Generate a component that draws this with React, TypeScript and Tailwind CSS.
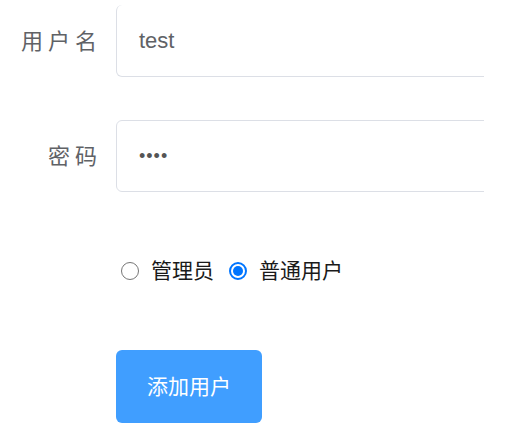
import React from 'react'

const font = { fontFamily: '"Liberation Sans", "Noto Sans CJK SC", sans-serif' }

const Field: React.FC<{ label: string; children: React.ReactNode; first?: boolean }> = ({ label, children, first }) => (
  <div className="flex items-center">
    <div className="w-[116px] pr-[14px] text-right text-[22px] tracking-[5px] text-[#606266]">{label}</div>
    <div className="w-[368px] h-[72px] overflow-hidden">
      <div
        className={
          'w-[400px] h-[72px] border border-[#dcdfe6] rounded-[6px] flex items-center pl-[22px] text-[22px] text-[#606266] ' +
          (first ? 'border-t-0' : '')
        }
      >
        {children}
      </div>
    </div>
  </div>
)

const Radio: React.FC<{ checked?: boolean; label: string }> = ({ checked, label }) => (
  <label className="flex items-center">
    {checked ? (
      <span className="w-[18px] h-[18px] rounded-full border-2 border-[#0075ff] flex items-center justify-center">
        <span className="w-[10px] h-[10px] rounded-full bg-[#0075ff]" />
      </span>
    ) : (
      <span className="w-[18px] h-[18px] rounded-full border-[1.5px] border-[#767676]" />
    )}
    <span className="ml-[12px] text-[21px] text-[#1a1a1a]">{label}</span>
  </label>
)

export default function App() {
  return (
    <div className="w-[520px] h-[444px] bg-white overflow-hidden" style={font}>
      <div className="flex flex-col pt-[5px]">
        <Field label="用户名" first>
          test
        </Field>
        <div className="mt-[43px]">
          <Field label="密码">
            <span className="text-[18px] tracking-[1px] text-[#555]">••••</span>
          </Field>
        </div>
        <div className="mt-[64px] h-[30px] flex items-center pl-[121px] gap-[15px]">
          <Radio label="管理员" />
          <Radio checked label="普通用户" />
        </div>
        <div className="mt-[64px] pl-[116px]">
          <button className="w-[146px] h-[73px] rounded-[6px] bg-[#409eff] text-white text-[21px]">添加用户</button>
        </div>
      </div>
    </div>
  )
}
